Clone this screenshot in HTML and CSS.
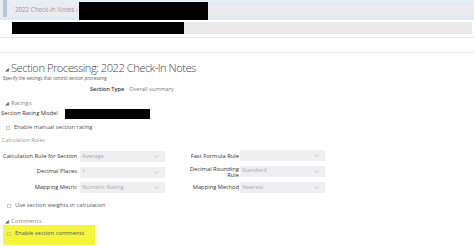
FILE: index.html
```html
<!DOCTYPE html>
<html>
<head>
<meta charset="utf-8">
<link rel="stylesheet" href="styles.css">
</head>
<body>
<div class="topbar">
  <span class="stripe"></span>
  <span class="crumb">2022 Check-In Notes ›</span>
  <span class="redact r1"></span>
</div>
<div class="subbar"><span class="redact r2"></span></div>
<div class="rule r-a"></div>
<div class="rule r-b"></div>

<div class="heading"><span class="tri">◢</span><h1>Section Processing: 2022 Check-In Notes</h1></div>
<div class="desc">Specify the settings that control section processing</div>

<div class="stype"><span class="lbl-b">Section Type</span><span class="val">Overall summary</span></div>

<div class="group"><span class="tri">◢</span><span class="gtitle">Ratings</span></div>

<div class="srm"><span class="lbl-m">Section Rating Model</span><span class="redact r3"></span></div>

<label class="check c1"><span class="box"></span><span>Enable manual section rating</span></label>

<div class="sub">Calculation Rules</div>

<div class="calc">
  <div class="lbl">Calculation Rule for Section</div>
  <div class="sel"><span>Average</span><svg class="chev" viewBox="0 0 5 3" width="5" height="3"><polyline points="0.5,0.5 2.5,2.5 4.5,0.5" fill="none" stroke="#b5b5b8" stroke-width="0.8"/></svg></div>
  <div class="lbl">Fast Formula Rule</div>
  <div class="sel up"><span></span><svg class="chev" viewBox="0 0 5 3" width="5" height="3"><polyline points="0.5,0.5 2.5,2.5 4.5,0.5" fill="none" stroke="#b5b5b8" stroke-width="0.8"/></svg></div>

  <div class="lbl">Decimal Places</div>
  <div class="sel"><span>1</span><svg class="chev" viewBox="0 0 5 3" width="5" height="3"><polyline points="0.5,0.5 2.5,2.5 4.5,0.5" fill="none" stroke="#b5b5b8" stroke-width="0.8"/></svg></div>
  <div class="lbl two"><span>Decimal Rounding</span><span>Rule</span></div>
  <div class="sel up"><span>Standard</span><svg class="chev" viewBox="0 0 5 3" width="5" height="3"><polyline points="0.5,0.5 2.5,2.5 4.5,0.5" fill="none" stroke="#b5b5b8" stroke-width="0.8"/></svg></div>

  <div class="lbl">Mapping Metric</div>
  <div class="sel"><span>Numeric Rating</span><svg class="chev" viewBox="0 0 5 3" width="5" height="3"><polyline points="0.5,0.5 2.5,2.5 4.5,0.5" fill="none" stroke="#b5b5b8" stroke-width="0.8"/></svg></div>
  <div class="lbl">Mapping Method</div>
  <div class="sel"><span>Nearest</span><svg class="chev" viewBox="0 0 5 3" width="5" height="3"><polyline points="0.5,0.5 2.5,2.5 4.5,0.5" fill="none" stroke="#b5b5b8" stroke-width="0.8"/></svg></div>
</div>

<label class="check c2"><span class="box"></span><span>Use section weights in calculation</span></label>

<div class="group g2"><span class="tri">◢</span><span class="gtitle">Comments</span></div>

<div class="hl">
  <label class="check c3"><span class="box on"></span><span>Enable section comments</span></label>
</div>
</body>
</html>
```

FILE: styles.css
```css
* { box-sizing: border-box; }
html, body { margin: 0; padding: 0; background: #fff; }
body {
  width: 474px;
  height: 246px;
  overflow: hidden;
  font-family: "Open Sans", "Noto Sans", sans-serif;
  color: #333;
  font-size: 6px;
  line-height: 1;
}

.redact { display: block; background: #000; }

.topbar {
  height: 20px;
  display: flex;
  align-items: stretch;
  background: linear-gradient(to bottom, #e2f2fb 0px, #ecebf0 3px, #ecebf0 15px, #dbe7f7 20px);
}
.stripe { width: 4px; margin-left: 3px; height: 17px; background: #b3c7d6; }
.crumb {
  margin-left: 8px;
  width: 64px;
  align-self: center;
  color: #9a98a6;
  font-size: 6.2px;
  white-space: nowrap;
}
.r1 { width: 129px; margin-top: 2px; height: 18px; }

.subbar {
  margin: 2px 2px 0 12px;
  height: 12px;
  background: #ebe9ec;
}
.r2 { width: 172px; height: 12px; }

.rule { height: 1px; background: #e9e9e9; }
.r-a { margin-top: 3px; }
.r-b { margin-top: 14px; }

.tri { color: #666; font-size: 5px; line-height: 1; }

.heading {
  margin-top: 8px;
  height: 14px;
  display: flex;
  align-items: center;
  padding-left: 5px;
}
.heading .tri { margin-top: 2px; }
.heading h1 {
  margin: 0 0 0 2px;
  font-size: 11.2px;
  font-weight: 300;
  color: #444;
  letter-spacing: -0.5px;
  white-space: nowrap;
}
.desc { margin-left: 3px; margin-top: 1px; font-size: 4.4px; color: #555; }

.stype { margin-top: 7px; padding-left: 90px; display: flex; gap: 5px; font-size: 5.6px; }
.lbl-b { font-weight: 600; color: #333; }
.lbl-m { font-weight: 500; color: #333; }
.val { color: #777; }

.group { display: flex; align-items: center; padding-left: 5px; margin-top: 7px; }
.gtitle { margin-left: 2px; color: #888; font-size: 6px; }

.srm { margin-top: 3px; display: flex; align-items: center; padding-left: 1px; font-size: 5.8px; }
.r3 { margin-left: 7px; width: 85px; height: 10px; }

.check { display: flex; align-items: center; font-size: 5.8px; color: #555; }
.box { width: 4px; height: 4px; border: 0.6px solid #c9c9c9; background: #fff; margin-right: 4px; }
.c1 { margin-top: 6px; padding-left: 6px; }

.sub { margin-top: 7px; margin-left: 2px; color: #999; font-size: 5.4px; }

.calc {
  margin-top: 8px;
  display: grid;
  grid-template-columns: 80px 86px 74px 85px;
  grid-auto-rows: 11px;
  row-gap: 4.5px;
  font-size: 5.8px;
}
.lbl { text-align: right; padding-right: 3px; align-self: center; color: #333; white-space: nowrap; }
.calc .lbl:nth-child(4n+3) { padding-right: 1px; }
.lbl.two { display: flex; flex-direction: column; align-items: flex-end; gap: 0.5px; line-height: 6px; }
.sel {
  width: 85px;
  height: 11px;
  background: #efeff1;
  display: flex;
  align-items: center;
  justify-content: space-between;
  padding: 0 6px 0 2px;
  color: #a9a9ad;
}
.sel.up { margin-top: -1px; }
.chev { display: block; }

.c2 { margin-top: 10px; padding-left: 7px; }
.g2 { margin-top: 9px; }

.hl {
  margin: 1px 0 0 3px;
  width: 92px;
  height: 20px;
  background: #f4f53c;
  padding-top: 6px;
}
.c3 { padding-left: 4px; }
.box.on { background: #ecec8a; border-color: #d5d65a; }
```
